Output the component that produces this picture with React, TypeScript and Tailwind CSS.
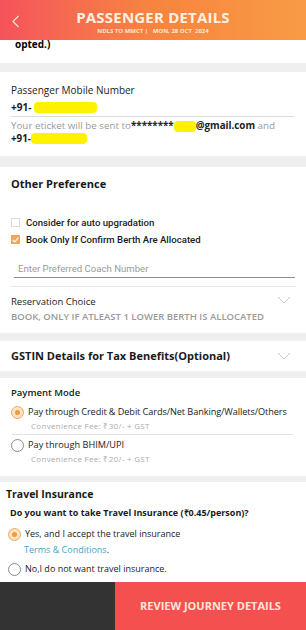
import React from 'react';

const Chevron: React.FC = () => (
  <svg width="14" height="8" viewBox="0 0 14 8" fill="none">
    <path d="M1 1l6 6 6-6" stroke="#c9c9c9" strokeWidth="1" />
  </svg>
);

const Radio: React.FC<{ checked?: boolean }> = ({ checked }) =>
  checked ? (
    <span className="flex h-[13px] w-[13px] shrink-0 items-center justify-center rounded-full border border-[#f0a85a] bg-[#fde3c4]">
      <span className="h-[5px] w-[5px] rounded-full bg-[#ef9a3f]" />
    </span>
  ) : (
    <span className="h-[13px] w-[13px] shrink-0 rounded-full border border-[#8a8a8a] bg-white" />
  );

const Yellow: React.FC<{ w: number }> = ({ w }) => (
  <span className="inline-block h-[11px] rounded-[4px] bg-[#fff200] align-middle" style={{ width: w }} />
);

export default function App() {
  return (
    <div className="relative h-[630px] w-[306px] overflow-hidden bg-[#efefef] font-['Open_Sans',sans-serif] text-[#1a1a1a]">
      {/* header */}
      <div className="relative flex h-[40px] flex-col items-center justify-center bg-gradient-to-r from-[#f5525a] via-[#f7843f] to-[#f99b45]">
        <svg className="absolute left-[11px] top-[15px]" width="9" height="13" viewBox="0 0 9 13" fill="none">
          <path d="M7.5 1L2 6.5 7.5 12" stroke="#fbe3cf" strokeWidth="1.2" />
        </svg>
        <div className="mt-[2px] text-[15px] font-bold leading-[19px] tracking-[0.2px] text-[#fdf0e0]">PASSENGER DETAILS</div>
        <div className="text-[6px] font-bold leading-[8px] text-[#fbe6d0]">NDLS TO MMCT&nbsp;|&nbsp;&nbsp; MON, 28 OCT &nbsp;2024</div>
      </div>

      {/* leftover text */}
      <div className="h-[23px] bg-white px-[15px]">
        <div className="text-[10px] font-bold leading-[9px] text-black">opted.)</div>
      </div>
      <div className="h-[9px]" />

      {/* mobile */}
      <div className="h-[84px] bg-white px-[11px] pt-[11px]">
        <div className="text-[10px] leading-[14px] text-[#222]">Passenger Mobile Number</div>
        <div className="mt-[3px] flex items-center text-[10px] font-bold leading-[14px]">
          +91-&nbsp;<Yellow w={63} />
        </div>
        <div className="mt-[2px] ml-0 h-px w-[283px] bg-[#dcdcdc]" />
        <div className="mt-[2px] whitespace-nowrap text-[9.8px] leading-[13px] text-[#9a9a9a]">
          Your eticket will be sent to<span className="font-bold text-[#222]">********</span>
          <Yellow w={22} />
          <span className="font-bold text-[#222]">@gmail.com</span> and
        </div>
        <div className="flex items-center text-[9.8px] font-bold leading-[13px]">
          +91-<Yellow w={56} />
        </div>
      </div>
      <div className="h-[11px]" />

      {/* other preference */}
      <div className="h-[166px] bg-white px-[11px] pt-[8px]">
        <div className="text-[11px] font-bold leading-[18px] text-[#1a1a1a]">Other Preference</div>
        <div className="mt-[21px] flex items-center gap-[6px] font-['Roboto',sans-serif] text-[9.6px] font-medium leading-[17px]">
          <span className="h-[9px] w-[9px] border border-[#dcdcdc] bg-white" />
          Consider for auto upgradation
        </div>
        <div className="flex items-center gap-[6px] font-['Roboto',sans-serif] text-[9.6px] font-medium leading-[17px]">
          <span className="flex h-[9px] w-[9px] items-center justify-center bg-[#f2a65a]">
            <svg width="7" height="6" viewBox="0 0 7 6" fill="none">
              <path d="M0.8 3l2 2 3.5-4.3" stroke="white" strokeWidth="1.1" />
            </svg>
          </span>
          Book Only If Confirm Berth Are Allocated
        </div>
        <div className="mt-[13px] ml-[3px] border-b border-[#8e8e8e] pb-[1px] pl-[4px] font-['Roboto',sans-serif] text-[9.6px] leading-[15px] text-[#9a9a9a]">
          Enter Preferred Coach Number
        </div>
        <div className="mt-[8px] h-px bg-[#e6e6e6]" />
        <div className="mt-[8px] flex items-start justify-between">
          <div>
            <div className="text-[9.5px] leading-[13px] text-[#222]">Reservation Choice</div>
            <div className="mt-[2px] whitespace-nowrap text-[9.5px] font-semibold leading-[13px] text-[#9a9a9a]">BOOK, ONLY IF ATLEAST 1 LOWER BERTH IS ALLOCATED</div>
          </div>
          <div className="mr-[4px] mt-[1px]"><Chevron /></div>
        </div>
      </div>
      <div className="h-[8px]" />

      {/* gstin */}
      <div className="flex h-[30px] items-center justify-between bg-white px-[11px]">
        <div className="text-[11px] font-bold text-[#1a1a1a]">GSTIN Details for Tax Benefits(Optional)</div>
        <div className="mr-[4px]"><Chevron /></div>
      </div>
      <div className="h-[7px]" />

      {/* payment */}
      <div className="h-[98px] bg-white px-[11px] pt-[8px]">
        <div className="text-[9.5px] font-semibold leading-[14px] text-[#1a1a1a]">Payment Mode</div>
        <div className="mt-[5px] flex items-center gap-[4px]">
          <Radio checked />
          <span className="whitespace-nowrap text-[9.2px] tracking-[-0.1px] leading-[14px] text-[#222]">Pay through Credit &amp; Debit Cards/Net Banking/Wallets/Others</span>
        </div>
        <div className="ml-[20px] mt-[1px] text-[8px] tracking-[0.3px] leading-[11px] text-[#ababab]">Convenience Fee: ₹30/- + GST</div>
        <div className="mt-[3px] ml-[1px] h-px w-[281px] bg-[#e3e3e3]" />
        <div className="mt-[3px] flex items-center gap-[4px]">
          <Radio />
          <span className="text-[9.2px] leading-[14px] text-[#222]">Pay through BHIM/UPI</span>
        </div>
        <div className="ml-[20px] mt-[1px] text-[8px] tracking-[0.3px] leading-[11px] text-[#ababab]">Convenience Fee: ₹20/- + GST</div>
      </div>
      <div className="h-[6px]" />

      {/* insurance */}
      <div className="h-[100px] bg-white px-[6px] pt-[4px]">
        <div className="text-[10.5px] font-bold leading-[16px] text-[#1a1a1a]">Travel Insurance</div>
        <div className="ml-[4px] mt-[4px] text-[9px] font-bold leading-[14px] text-[#1a1a1a]">Do you want to take Travel Insurance (₹0.45/person)?</div>
        <div className="mt-[7px] flex items-center gap-[4px] pl-[2px]">
          <Radio checked />
          <span className="text-[9px] leading-[14px] text-[#222]">Yes, and I accept the travel insurance</span>
        </div>
        <div className="ml-[18px] mt-[2px] text-[9px] leading-[14px] text-[#222]">
          <span className="text-[#4a9fc4]">Terms &amp; Conditions</span>.
        </div>
        <div className="mt-[5px] flex items-center gap-[4px] pl-[2px]">
          <Radio />
          <span className="text-[9px] leading-[14px] text-[#222]">No,I do not want travel insurance.</span>
        </div>
      </div>

      {/* bottom bar */}
      <div className="flex h-[48px]">
        <div className="w-[115px] bg-[#333333]" />
        <div className="flex flex-1 items-center justify-center bg-[#f4504f]">
          <span className="text-[11px] font-bold text-[#fde6d6]">REVIEW JOURNEY DETAILS</span>
        </div>
      </div>
    </div>
  );
}
